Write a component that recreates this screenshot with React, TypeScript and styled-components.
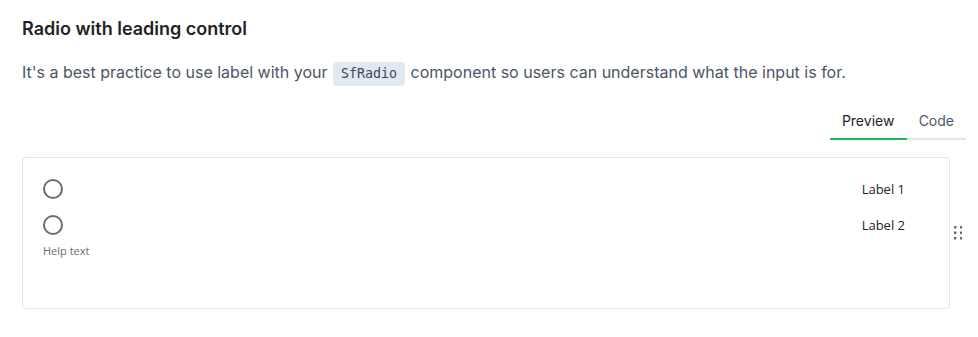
import styled, { createGlobalStyle } from 'styled-components'

const GlobalStyle = createGlobalStyle`
  body {
    margin: 0;
    background: #ffffff;
    font-family: Inter, "Liberation Sans", sans-serif;
  }
`

const Page = styled.div`
  width: 944px;
  padding: 17px 12px 0 22px;
`

const Title = styled.h3`
  margin: 0;
  font-size: 18px;
  line-height: 24px;
  font-weight: 600;
  color: #1f2328;
`

const Lead = styled.p`
  margin: 19px 0 0;
  font-size: 16px;
  line-height: 24px;
  color: #4a5568;
`

const Code = styled.code`
  display: inline-block;
  padding: 0 8px;
  margin: 0 1px;
  height: 24px;
  line-height: 24px;
  border-radius: 4px;
  background: #e2e8f0;
  color: #3c4a5c;
  font-family: "DejaVu Sans Mono", monospace;
  font-size: 13.3px;
  vertical-align: middle;
`

const TabRow = styled.div`
  display: flex;
  justify-content: flex-end;
  margin-top: 19px;
`

const Tab = styled.button<{ $active?: boolean }>`
  border: none;
  background: none;
  padding: 0 12px 1px;
  height: 35px;
  font-family: Inter, "Liberation Sans", sans-serif;
  font-size: 14px;
  color: ${(p) => (p.$active ? '#1f2328' : '#4a5568')};
  border-bottom: 2px solid ${(p) => (p.$active ? '#1db954' : '#e2e4e8')};
  min-width: ${(p) => (p.$active ? '77px' : '59px')};
  cursor: pointer;
`

const PreviewWrap = styled.div`
  display: flex;
  align-items: center;
  margin-top: 17px;
`

const PreviewBox = styled.div`
  flex: 1;
  height: 152px;
  border: 1px solid #e3e5e8;
  border-radius: 4px;
  box-sizing: border-box;
  padding: 21px 44px 0 20px;
  display: flex;
  flex-direction: column;
  gap: 16px;
  font-family: "Open Sans", sans-serif;
`

const Handle = styled.div`
  width: 16px;
  display: flex;
  justify-content: center;
`

const RadioRow = styled.label`
  display: flex;
  justify-content: space-between;
  align-items: flex-start;
`

const Control = styled.div`
  display: flex;
  flex-direction: column;
`

const Circle = styled.span`
  display: block;
  width: 20px;
  height: 20px;
  box-sizing: border-box;
  border: 2px solid #6b6b72;
  border-radius: 50%;
`

const Help = styled.span`
  margin-top: 8px;
  font-size: 11px;
  color: #6b6b72;
`

const Label = styled.span`
  font-size: 13px;
  line-height: 20px;
  color: #1f2328;
`

const Dots = () => (
  <svg width="8" height="14" viewBox="0 0 8 14">
    {[0, 5.5, 11].map((y) =>
      [0, 6].map((x) => (
        <rect key={`${x}-${y}`} x={x} y={y} width="2.4" height="2.4" rx="0.6" fill="#5b6270" />
      ))
    )}
  </svg>
)

export default function App() {
  return (
    <Page>
      <GlobalStyle />
      <Title>Radio with leading control</Title>
      <Lead>
        It's a best practice to use label with your <Code>SfRadio</Code> component so users can
        understand what the input is for.
      </Lead>
      <TabRow>
        <Tab $active>Preview</Tab>
        <Tab>Code</Tab>
      </TabRow>
      <PreviewWrap>
        <PreviewBox>
          <RadioRow>
            <Control>
              <Circle />
            </Control>
            <Label>Label 1</Label>
          </RadioRow>
          <RadioRow>
            <Control>
              <Circle />
              <Help>Help text</Help>
            </Control>
            <Label>Label 2</Label>
          </RadioRow>
        </PreviewBox>
        <Handle>
          <Dots />
        </Handle>
      </PreviewWrap>
    </Page>
  )
}
